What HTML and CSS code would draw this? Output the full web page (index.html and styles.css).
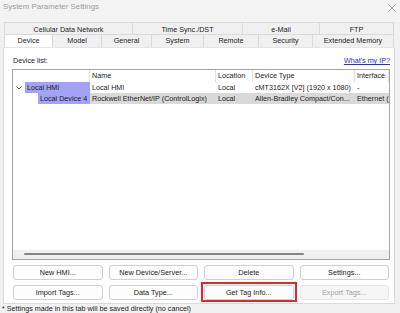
FILE: index.html
```html
<!DOCTYPE html>
<html>
<head>
<meta charset="utf-8">
<link rel="stylesheet" href="styles.css">
</head>
<body>
<div class="window">
  <div class="titlebar">
    <span class="title">System Parameter Settings</span>
    <svg class="close" width="8" height="8" viewBox="0 0 8 8"><path d="M0.5 0.5 L7.5 7.5 M7.5 0.5 L0.5 7.5" stroke="#8a8a8a" stroke-width="0.8" fill="none"/></svg>
  </div>
  <div class="tabs">
    <div class="tabrow row1">
      <div class="tab">Cellular Data Network</div>
      <div class="tab">Time Sync./DST</div>
      <div class="tab">e-Mail</div>
      <div class="tab">FTP</div>
    </div>
    <div class="tabrow row2">
      <div class="tab active">Device</div>
      <div class="tab">Model</div>
      <div class="tab">General</div>
      <div class="tab">System</div>
      <div class="tab">Remote</div>
      <div class="tab">Security</div>
      <div class="tab">Extended Memory</div>
    </div>
  </div>
  <div class="panel">
    <div class="listhead">
      <span>Device list:</span>
      <a class="link" href="#">What's my IP?</a>
    </div>
    <div class="listbox">
      <div class="lrow header">
        <div class="cell c0"></div>
        <div class="cell">Name</div>
        <div class="cell">Location</div>
        <div class="cell">Device Type</div>
        <div class="cell last">Interface</div>
      </div>
      <div class="lrow">
        <div class="cell c0 tree">
          <svg class="chev" width="6" height="4" viewBox="0 0 6 4"><path d="M0.5 0.5 L3 3 L5.5 0.5" stroke="#444" stroke-width="0.9" fill="none"/></svg>
          <span class="hl lvl1">Local HMI</span>
        </div>
        <div class="cell">Local HMI</div>
        <div class="cell">Local</div>
        <div class="cell">cMT3162X [V2] (1920 x 1080)</div>
        <div class="cell last">-</div>
      </div>
      <div class="lrow selected">
        <div class="cell c0 tree">
          <span class="hl lvl2">Local Device 4</span>
        </div>
        <div class="cell">Rockwell EtherNet/IP (ControlLogix)</div>
        <div class="cell">Local</div>
        <div class="cell">Allen-Bradley Compact/Con...</div>
        <div class="cell last">Ethernet (</div>
      </div>
      <div class="lspacer"></div>
      <div class="hscroll"><div class="thumb"></div></div>
    </div>
    <div class="buttons">
      <div class="btn">New HMI...</div>
      <div class="btn">New Device/Server...</div>
      <div class="btn">Delete</div>
      <div class="btn">Settings...</div>
      <div class="btn">Import Tags...</div>
      <div class="btn">Data Type...</div>
      <div class="btn marked">Get Tag Info...</div>
      <div class="btn disabled">Export Tags...</div>
    </div>
  </div>
  <div class="footer">* Settings made in this tab will be saved directly (no cancel)</div>
</div>
</body>
</html>
```

FILE: styles.css
```css
* { box-sizing: border-box; }
html, body { margin: 0; padding: 0; }
body {
  width: 400px;
  height: 313px;
  overflow: hidden;
  background: #f1f1f1;
  font-family: "Liberation Sans", Arial, sans-serif;
  font-size: 7.2px;
  color: #1c1c1c;
}
.window { width: 400px; height: 313px; display: flex; flex-direction: column; }

.titlebar {
  height: 22px;
  display: flex;
  justify-content: space-between;
  align-items: flex-start;
  padding: 2px 4px 0 3px;
  background: #f3f3f3;
}
.title { font-size: 7.9px; line-height: 9px; color: #9c9c9c; }
.close { margin-top: 2px; }

.tabs { margin-left: 4px; width: 390px; }
.tabrow { display: grid; }
.row1 { grid-template-columns: 129px 110px 77px 74px; height: 12px; }
.row2 { grid-template-columns: 49px 49px 50px 52px 55px 54px 81px; height: 13px; }
.tab {
  text-align: center;
  background: #f0f0f0;
  border-right: 1px solid #dadada;
  border-top: 1px solid #dadada;
  white-space: nowrap;
}
.tab:first-child { border-left: 1px solid #dadada; }
.row1 .tab { line-height: 12px; padding-top: 1px; }
.row2 .tab { line-height: 12px; }
.tab.active { background: #ffffff; }

.panel {
  margin-left: 3px;
  width: 392px;
  height: 257px;
  background: #ffffff;
  border: 1px solid #dadada;
  border-top-color: #e6e6e6;
  padding: 8px 4px 3px 8px;
  display: flex;
  flex-direction: column;
}
.listhead {
  height: 10px;
  line-height: 10px;
  display: flex;
  justify-content: space-between;
  padding-left: 1px;
}
.link { color: #2b2bd6; text-decoration: underline; }

.listbox {
  margin-top: 3px;
  width: 378px;
  height: 191px;
  border: 1px solid #a4a4a4;
  display: flex;
  flex-direction: column;
  overflow: hidden;
}
.lrow {
  display: grid;
  grid-template-columns: 77px 126px 37px 102px 1fr;
  height: 11px;
  line-height: 11px;
  white-space: nowrap;
}
.lrow.header { height: 12px; line-height: 12px; }
.header .cell { border-right: 1px solid #e2e2e2; }
.header .cell.last { border-right: 1px solid #e2e2e2; }
.cell { padding-left: 2px; overflow: hidden; }
.c0 { padding-left: 0; }
.lrow.selected .cell:not(.c0) { background: #d9d9d9; }
.tree { display: flex; align-items: center; }
.chev { margin-left: 3px; margin-right: 3px; }
.hl {
  background: #a3a3f6;
  height: 11px;
  flex: 1;
  padding-left: 2px;
}
.lvl2 { margin-left: 25px; }
.lspacer { flex: 1; }
.hscroll {
  height: 9px;
  background: #f0f0f0;
  padding: 3px 0 0 11px;
}
.thumb {
  width: 280px;
  height: 2px;
  border-radius: 1px;
  background: #858585;
}

.buttons {
  margin-top: 5px;
  width: 376px;
  margin-left: 1px;
  display: grid;
  grid-template-columns: repeat(4, 1fr);
  grid-auto-rows: 15px;
  column-gap: 6px;
  row-gap: 5px;
}
.btn {
  background: #fdfdfd;
  border: 1px solid #d0d0d0;
  border-radius: 3px;
  text-align: center;
  line-height: 13px;
  font-size: 7.3px;
  white-space: nowrap;
}
.btn.disabled { color: #a3a3a3; background: #f6f6f6; border-color: #e6e6e6; }
.btn.marked { position: relative; }
.btn.marked::after {
  content: "";
  position: absolute;
  left: -4px;
  right: -4px;
  top: -4px;
  bottom: -3px;
  border: 2px solid #e3262b;
}

.footer {
  height: 9px;
  line-height: 9px;
  padding-left: 2px;
  white-space: nowrap;
}
```
